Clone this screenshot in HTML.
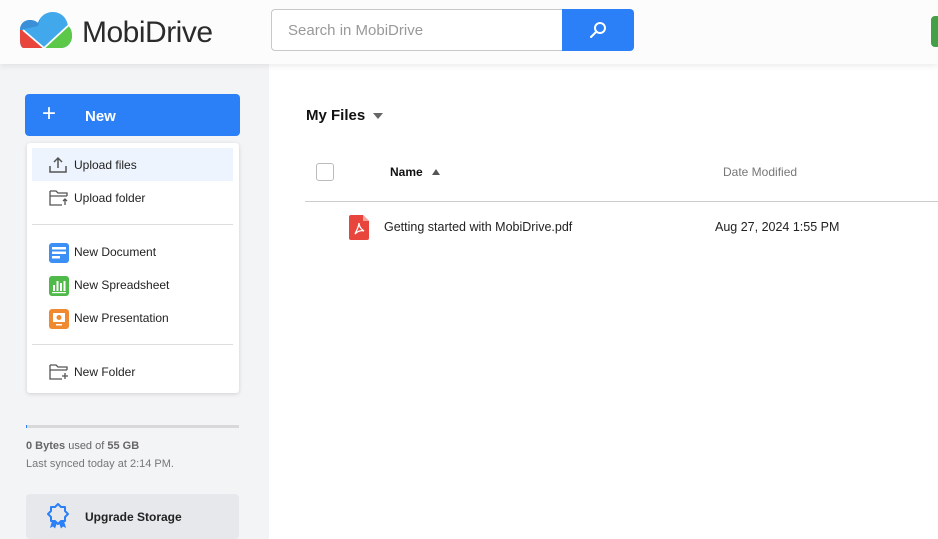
<!DOCTYPE html>
<html><head><meta charset="utf-8"><style>
*{box-sizing:border-box;margin:0;padding:0}
body{width:938px;height:539px;overflow:hidden;font-family:"Liberation Sans",Arial,sans-serif;background:#fff;position:relative;color:#222}
.hdr{position:absolute;left:0;top:0;width:938px;height:64px;background:#fcfcfc;box-shadow:0 2px 6px rgba(0,0,0,.08);z-index:2}
.side{position:absolute;left:0;top:64px;width:269px;height:475px;background:#f3f4f6}
.logo{position:absolute;left:82px;top:16px;font-size:30px;color:#2b2b2b;letter-spacing:-.5px}
.search{position:absolute;left:271px;top:9px;width:292px;height:42px;border:1px solid #c8c8c8;border-right:none;border-radius:4px 0 0 4px;background:#fff;font-size:15px;color:#999;padding:12px 16px}
.sbtn{position:absolute;left:562px;top:9px;width:72px;height:42px;background:#2b80f7;border-radius:0 4px 4px 0}
.green{position:absolute;left:931px;top:16px;width:10px;height:31px;background:#43a047;border-radius:4px}
.new{position:absolute;left:25px;top:94px;width:215px;height:42px;background:#2b80f7;border-radius:4px;color:#fff;font-weight:bold;font-size:15px}
.menu{position:absolute;left:27px;top:143px;width:212px;height:250px;background:#fff;border-radius:3px;box-shadow:0 1px 4px rgba(0,0,0,.15)}
.it{position:absolute;left:5px;width:201px;height:33px;font-size:12px;color:#222}
.it span{position:absolute;left:42px;top:10px}
.it .ic{position:absolute;left:17px;top:8px}
.sep{position:absolute;left:5px;width:201px;height:1px;background:#ddd}
</style></head><body>
<div class="hdr">
<svg style="position:absolute;left:20px;top:12px" width="52" height="36" viewBox="0 0 52 36">
<defs><clipPath id="c"><path d="M4 36 C1 36 0 32 0 28 L0 18 C0 12 4 8 10 8 C13 8 16 9 18 11 C20 4 26 0 33 0 C41 0 47 6 48 14 C51 16 52 20 52 24 C52 31 47 36 41 36 Z"/></clipPath></defs>
<g clip-path="url(#c)">
<rect width="52" height="36" fill="#42a8ec"/>
<path d="M0 8 L20 8 L18 14 L0 18 Z" fill="#3a8fd8"/>
<polygon points="0,18 3,18 23,36 0,36" fill="#e8453c"/>
<polygon points="25,36 49,13 52,13 52,36" fill="#5bc84a"/>
<path d="M3 18 L24 36 L50 12" fill="none" stroke="#fff" stroke-width="1.8"/>
</g>
</svg>
<div class="logo">MobiDrive</div>
<div class="search">Search in MobiDrive</div>
<div class="sbtn"><svg style="position:absolute;left:27px;top:12px" width="18" height="18" viewBox="0 0 18 18"><circle cx="11" cy="7" r="5" fill="none" stroke="#fff" stroke-width="2"/><path d="M7.5 10.5 L2 16" stroke="#fff" stroke-width="2" stroke-linecap="round"/></svg></div>
<div class="green"></div>
</div>
<div class="side"></div>
<div class="new"><span style="position:absolute;left:17px;top:6px;font-size:24px;font-weight:normal">+</span><span style="position:absolute;left:60px;top:14px">New</span></div>
<div class="menu">
<div class="it" style="top:5px;background:#edf4fd"><svg class="ic" width="18" height="17" viewBox="0 0 18 17"><path d="M1 10v6h16v-6" fill="none" stroke="#555" stroke-width="1.5"/><path d="M9 12V2M5 6l4-4 4 4" fill="none" stroke="#555" stroke-width="1.5"/></svg><span>Upload files</span></div>
<div class="it" style="top:38px"><svg class="ic" width="20" height="17" viewBox="0 0 20 17"><path d="M1 2h6l2 2h9v3M1 2v14h12" fill="none" stroke="#555" stroke-width="1.3"/><path d="M1 7h17" stroke="#555" stroke-width="1.3"/><path d="M16 16v-6M14 12l2-2 2 2" fill="none" stroke="#555" stroke-width="1.3"/></svg><span>Upload folder</span></div>
<div class="sep" style="top:81px"></div>
<div class="it" style="top:92px"><svg class="ic" width="20" height="20" viewBox="0 0 20 20"><rect width="20" height="20" rx="3" fill="#3b8ff5"/><rect x="3" y="4" width="14" height="2.5" fill="#fff"/><rect x="3" y="8.5" width="14" height="2.5" fill="#fff"/><rect x="3" y="13" width="8" height="2.5" fill="#fff"/></svg><span>New Document</span></div>
<div class="it" style="top:125px"><svg class="ic" width="20" height="20" viewBox="0 0 20 20"><rect width="20" height="20" rx="3" fill="#4fba4a"/><rect x="4" y="9" width="2" height="6" fill="#fff"/><rect x="7.5" y="5" width="2" height="10" fill="#fff"/><rect x="11" y="7" width="2" height="8" fill="#fff"/><rect x="14.5" y="5" width="2" height="10" fill="#fff"/><rect x="3" y="16" width="14" height="1.2" fill="#fff"/></svg><span>New Spreadsheet</span></div>
<div class="it" style="top:158px"><svg class="ic" width="20" height="20" viewBox="0 0 20 20"><rect width="20" height="20" rx="3" fill="#f08a30"/><rect x="4" y="4" width="12" height="9" fill="#fff"/><circle cx="10" cy="8.5" r="2.5" fill="#f08a30"/><rect x="7" y="15" width="6" height="1.5" fill="#fff"/></svg><span>New Presentation</span></div>
<div class="sep" style="top:201px"></div>
<div class="it" style="top:212px"><svg class="ic" width="20" height="17" viewBox="0 0 20 17"><path d="M1 2h6l2 2h9v3M1 2v14h12" fill="none" stroke="#555" stroke-width="1.3"/><path d="M1 7h17" stroke="#555" stroke-width="1.3"/><path d="M16 10v6M13 13h6" stroke="#555" stroke-width="1.3"/></svg><span>New Folder</span></div>
</div>
<div style="position:absolute;left:26px;top:425px;width:213px;height:3px;background:#d8d8da"></div>
<div style="position:absolute;left:26px;top:425px;width:1px;height:3px;background:#2b80f7"></div>
<div style="position:absolute;left:26px;top:440px;font-size:11px;color:#666"><b>0 Bytes</b> used of <b>55 GB</b></div>
<div style="position:absolute;left:26px;top:458px;font-size:11px;color:#777">Last synced today at 2:14 PM.</div>
<div style="position:absolute;left:26px;top:494px;width:213px;height:45px;background:#e6e8ec;border-radius:4px">
<svg style="position:absolute;left:21px;top:9px" width="22" height="26" viewBox="0 0 22 26">
<polygon points="11,1 14,4 18,4 18,8 21,11 18,14 18,18 14,18 11,21 8,18 4,18 4,14 1,11 4,8 4,4 8,4" fill="none" stroke="#2b80f7" stroke-width="2" stroke-linejoin="round"/>
<path d="M5 18 L3 25 L6 23.5 L8 25.5 L10 20 Z M17 18 L19 25 L16 23.5 L14 25.5 L12 20 Z" fill="#2b80f7"/>
</svg>
<span style="position:absolute;left:59px;top:16px;font-size:12px;font-weight:bold;color:#222">Upgrade Storage</span></div>

<div style="position:absolute;left:306px;top:107px;font-size:15px;font-weight:bold;color:#111">My Files</div>
<div style="position:absolute;left:373px;top:113px;width:0;height:0;border-left:5px solid transparent;border-right:5px solid transparent;border-top:6px solid #666"></div>
<div style="position:absolute;left:316px;top:163px;width:18px;height:18px;border:1px solid #bbb;border-radius:3px"></div>
<div style="position:absolute;left:390px;top:165px;font-size:12px;font-weight:bold;color:#111">Name</div>
<div style="position:absolute;left:432px;top:169px;width:0;height:0;border-left:4px solid transparent;border-right:4px solid transparent;border-bottom:6px solid #555"></div>
<div style="position:absolute;left:723px;top:165px;font-size:12px;color:#777">Date Modified</div>
<div style="position:absolute;left:305px;top:201px;width:633px;height:1px;background:#ccc"></div>
<svg style="position:absolute;left:349px;top:215px" width="20" height="25" viewBox="0 0 20 25"><path d="M0 2a2 2 0 012-2h12l6 6v17a2 2 0 01-2 2H2a2 2 0 01-2-2z" fill="#e8453c"/><path d="M14 0v6h6z" fill="#f4a39d"/><path d="M6 19c2-4 4-8 4-11 0 3 2 6 5 8-3-1-6 0-9 3z" fill="none" stroke="#fff" stroke-width="1.3"/></svg>
<div style="position:absolute;left:384px;top:220px;font-size:12.5px;color:#222">Getting started with MobiDrive.pdf</div>
<div style="position:absolute;left:715px;top:220px;font-size:12.5px;color:#222">Aug 27, 2024 1:55 PM</div>
</body></html>
